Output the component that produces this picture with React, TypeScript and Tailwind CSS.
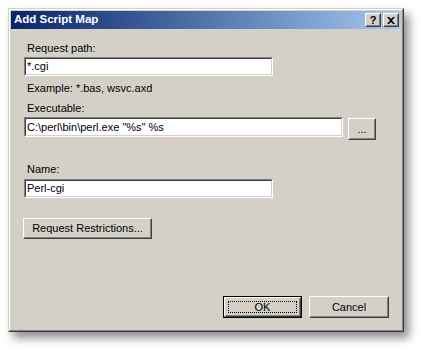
import React from "react";

const font = { fontFamily: '"Liberation Sans", Arial, sans-serif' };

function Field({ value, width }: { value: string; width: string }) {
  // classic sunken edit box
  return (
    <div className={`${width} border border-t-[#808080] border-l-[#808080] border-b-white border-r-white`}>
      <div className="h-full border border-t-[#404040] border-l-[#404040] border-b-[#d4d0c8] border-r-[#d4d0c8] bg-white flex items-center pl-[1px] text-[11px] text-black leading-none">
        {value}
      </div>
    </div>
  );
}

function Button({
  label,
  className,
  isDefault,
}: {
  label: string;
  className: string;
  isDefault?: boolean;
}) {
  const face = (
    <div className="h-full border border-t-white border-l-white border-b-[#404040] border-r-[#404040]">
      <div className="h-full border border-t-[#d4d0c8] border-l-[#d4d0c8] border-b-[#808080] border-r-[#808080] bg-[#d4d0c8] flex items-center justify-center p-[2px]">
        {isDefault ? (
          <div className="w-full h-full border border-dotted border-black flex items-center justify-center">
            {label}
          </div>
        ) : (
          label
        )}
      </div>
    </div>
  );
  return (
    <div className={`${className} text-[11px] text-black leading-none`}>
      {isDefault ? <div className="h-full border border-black">{face}</div> : face}
    </div>
  );
}

function TitleButton({ children }: { children: React.ReactNode }) {
  return (
    <div className="w-[16px] h-[14px] border border-t-white border-l-white border-b-[#404040] border-r-[#404040]">
      <div className="h-full border border-t-[#d4d0c8] border-l-[#d4d0c8] border-b-[#808080] border-r-[#808080] bg-[#d4d0c8] flex items-center justify-center">
        {children}
      </div>
    </div>
  );
}

export default function App() {
  return (
    <div className="w-[421px] h-[350px] bg-white pt-[8px] pl-[8px]" style={font}>
      <div className="w-[396px] h-[324px] border border-t-[#d4d0c8] border-l-[#d4d0c8] border-b-[#404040] border-r-[#404040] shadow-[5px_6px_9px_rgba(0,0,0,0.45)]">
        <div className="h-full border border-t-white border-l-white border-b-[#808080] border-r-[#808080] bg-[#d4d0c8] p-[1px] flex flex-col">
          {/* title bar */}
          <div className="h-[18px] flex items-center bg-gradient-to-r from-[#0a246a] to-[#a6caf0] pl-[3px] pr-[2px]">
            <span className="text-white font-bold text-[11.5px] leading-none flex-1">Add Script Map</span>
            <div className="flex gap-[2px]">
              <TitleButton>
                <span className="text-[11px] font-bold leading-none text-black">?</span>
              </TitleButton>
              <TitleButton>
                <svg width="8" height="7" viewBox="0 0 8 7">
                  <path d="M0 0h2l2 2 2-2h2L5 3.5 8 7H6L4 5 2 7H0l3-3.5z" fill="#000" />
                </svg>
              </TitleButton>
            </div>
          </div>

          {/* body */}
          <div className="flex-1 flex flex-col pl-[13px] pr-[12px] text-[11px] text-black">
            <div className="mt-[13px] h-[13px] leading-[13px] pl-[3px]">Request path:</div>
            <div className="mt-[2px] h-[19px] flex">
              <Field value="*.cgi" width="w-[249px]" />
            </div>
            <div className="mt-[6px] h-[13px] leading-[13px] pl-[3px]">Example: *.bas, wsvc.axd</div>
            <div className="mt-[7px] h-[13px] leading-[13px] pl-[3px]">Executable:</div>
            <div className="mt-[2px] h-[23px] flex gap-[5px]">
              <div className="h-[20px] flex">
                <Field value={'C:\\perl\\bin\\perl.exe "%s" %s'} width="w-[319px]" />
              </div>
              <Button label="..." className="mt-[1px] w-[28px] h-[22px]" />
            </div>
            <div className="mt-[23px] h-[13px] leading-[13px] pl-[3px]">Name:</div>
            <div className="mt-[3px] h-[19px] flex">
              <Field value="Perl-cgi" width="w-[249px]" />
            </div>
            <div className="mt-[20px] flex -ml-[1px]">
              <Button label="Request Restrictions..." className="w-[129px] h-[21px]" />
            </div>
            <div className="mt-[57px] flex justify-end gap-[7px]">
              <Button label="OK" className="w-[79px] h-[22px]" isDefault />
              <Button label="Cancel" className="w-[80px] h-[22px]" />
            </div>
          </div>
        </div>
      </div>
    </div>
  );
}
